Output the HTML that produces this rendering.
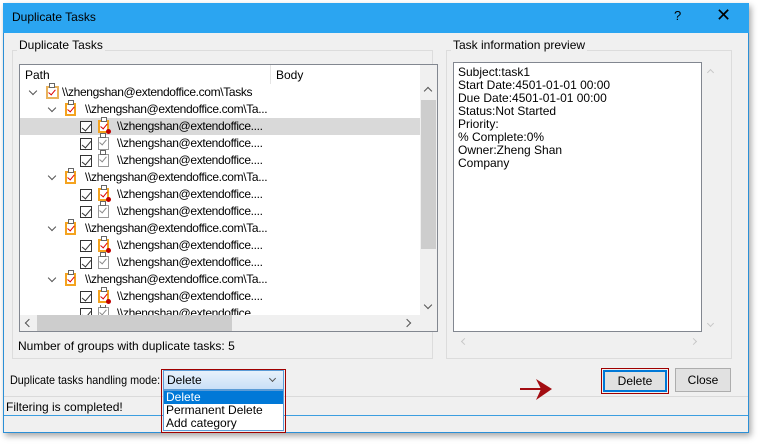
<!DOCTYPE html>
<html><head><meta charset="utf-8"><style>
*{margin:0;padding:0;box-sizing:border-box}
body{width:758px;height:445px;background:#fff;font-family:"Liberation Sans",sans-serif;font-size:12px;color:#000;position:relative;overflow:hidden}
.a{position:absolute;white-space:nowrap}
.win{left:3px;top:3px;width:746px;height:430px;background:#f0f0f0;border:1px solid #2b8fd6;box-shadow:2px 3px 6px rgba(0,0,0,.35)}
.title{left:3px;top:3px;width:746px;height:30px;background:#2ba5f1}
.gb{border:1px solid #dcdcdc}
.row{position:absolute;left:20px;width:400px;height:17px;line-height:17px;letter-spacing:-0.35px}
.cb{position:absolute;top:3px;width:12px;height:12px;border:1px solid #333;background:#fff}
.cb:after{content:"";position:absolute;left:3px;top:0px;width:4px;height:8px;border-right:1.5px solid #333;border-bottom:1.5px solid #333;transform:rotate(40deg)}
.chev{position:absolute;top:4px;width:6px;height:6px;border-right:1.5px solid #555;border-bottom:1.5px solid #555;transform:rotate(45deg)}
.ic{position:absolute;top:2px;width:11px;height:13px;border:2px solid #f4a31f;background:#fff}
.ic.g{border-color:#999;border-width:1.5px}
.ic:before{content:"";position:absolute;left:1px;top:-5px;width:4px;height:3px;border:1px solid #666;background:#fff}
.ic:after{content:"";position:absolute;left:2px;top:0px;width:3px;height:6px;border-right:1.5px solid #d00;border-bottom:1.5px solid #d00;transform:rotate(40deg)}
.ic.g:after{border-color:#888}
.dot{position:absolute;top:11px;width:5px;height:5px;border-radius:50%;background:#c00000}
.t{position:absolute;top:0}
</style></head><body>
<div class="a win"></div>
<div class="a title"></div>
<div class="a" style="left:12px;top:10px;font-size:12px">Duplicate Tasks</div>
<div class="a" style="left:674px;top:8px;font-size:13px">?</div>
<div class="a" style="left:716px;top:5px;font-size:18px;font-weight:300">✕</div>

<div class="a gb" style="left:12px;top:50px;width:421px;height:309px"></div>
<div class="a" style="left:17px;top:38px;background:#f0f0f0;padding:0 2px">Duplicate Tasks</div>
<div class="a" style="left:19px;top:64px;width:419px;height:268px;background:#fff;border:1px solid #828790;overflow:hidden">
 <div class="a" style="left:250px;top:0;width:1px;height:19px;background:#e5e5e5"></div>
 <div class="a" style="left:5px;top:3px">Path</div>
 <div class="a" style="left:256px;top:3px">Body</div>
 <div class="a" style="left:400px;top:0;width:17px;height:250px;background:#f0f0f0"></div>
 <div class="a" style="left:401px;top:35px;width:15px;height:149px;background:#cdcdcd"></div>
 <div class="a" style="left:405px;top:23px;width:6px;height:6px;border-left:1.5px solid #555;border-top:1.5px solid #555;transform:rotate(45deg)"></div>
 <div class="a" style="left:405px;top:237px;width:6px;height:6px;border-right:1.5px solid #555;border-bottom:1.5px solid #555;transform:rotate(45deg)"></div>
 <div class="a" style="left:0;top:250px;width:417px;height:17px;background:#f0f0f0"></div>
 <div class="a" style="left:17px;top:250px;width:195px;height:17px;background:#cdcdcd"></div>
 <div class="a" style="left:6px;top:255px;width:6px;height:6px;border-left:1.5px solid #555;border-bottom:1.5px solid #555;transform:rotate(45deg)"></div>
 <div class="a" style="left:384px;top:255px;width:6px;height:6px;border-right:1.5px solid #555;border-top:1.5px solid #555;transform:rotate(45deg)"></div>
</div>
<div class="a" style="left:20px;top:118px;width:400px;height:17px;background:#d9d9d9"></div>
<div id="rows"></div>

<div class="a" style="left:18px;top:339px">Number of groups with duplicate tasks: 5</div>

<div class="a gb" style="left:446px;top:50px;width:286px;height:309px"></div>
<div class="a" style="left:451px;top:38px;background:#f0f0f0;padding:0 2px">Task information preview</div>
<div class="a" style="left:453px;top:62px;width:249px;height:270px;background:#fff;border:1px solid #828790;padding:3px 0 0 4px;line-height:13px">Subject:task1<br>Start Date:4501-01-01 00:00<br>Due Date:4501-01-01 00:00<br>Status:Not Started<br>Priority:<br>% Complete:0%<br>Owner:Zheng Shan<br>Company</div>
<div class="a" style="left:708px;top:70px;width:5px;height:5px;border-left:1.5px solid #c8c8c8;border-top:1.5px solid #c8c8c8;transform:rotate(45deg)"></div>
<div class="a" style="left:708px;top:321px;width:5px;height:5px;border-right:1.5px solid #c8c8c8;border-bottom:1.5px solid #c8c8c8;transform:rotate(45deg)"></div>
<div class="a" style="left:462px;top:339px;width:5px;height:5px;border-left:1.5px solid #c8c8c8;border-bottom:1.5px solid #c8c8c8;transform:rotate(45deg)"></div>
<div class="a" style="left:691px;top:339px;width:5px;height:5px;border-right:1.5px solid #c8c8c8;border-top:1.5px solid #c8c8c8;transform:rotate(45deg)"></div>

<div class="a" style="left:10px;top:373px;transform:scaleX(0.9);transform-origin:0 0">Duplicate tasks handling mode:</div>
<div class="a" style="left:4px;top:396px;width:744px;height:1px;background:#dadada"></div>
<div class="a" style="left:6px;top:400px">Filtering is completed!</div>
<div class="a" style="left:4px;top:415px;width:744px;height:1px;background:#3c9ee0"></div>

<div class="a" style="left:161px;top:369px;width:125px;height:64px;border:1px solid #a00000"></div>
<div class="a" style="left:163px;top:370px;width:121px;height:20px;background:linear-gradient(#e8f2fb,#c9e0f7);border:1px solid #5a9bd6;padding:2px 0 0 3px">Delete</div>
<div class="a" style="left:270px;top:376px;width:5px;height:5px;border-right:1px solid #555;border-bottom:1px solid #555;transform:rotate(45deg)"></div>
<div class="a" style="left:163px;top:390px;width:121px;height:41px;background:#fff;border:1px solid #5a9bd6;line-height:13px">
 <div style="background:#0078d7;color:#fff;padding-left:2px">Delete</div>
 <div style="padding-left:2px">Permanent Delete</div>
 <div style="padding-left:2px">Add category</div>
</div>

<svg class="a" style="left:518px;top:377px" width="36" height="25"><path d="M2 11h22V13H2z" fill="#a30d12"/><path d="M18 2 L34 12 L18 23 L23 12z" fill="#a30d12"/></svg>

<div class="a" style="left:601px;top:368px;width:68px;height:26px;border:1px solid #a00000;padding:1px">
 <div style="width:100%;height:100%;border:2px solid #0078d7;background:#e1e1e1;text-align:center;line-height:19px">Delete</div></div>
<div class="a" style="left:675px;top:368px;width:56px;height:24px;border:1px solid #adadad;background:#e1e1e1;text-align:center;line-height:22px">Close</div>

<script>
var R=[[0,'f','\\\\zhengshan@extendoffice.com\\Tasks'],[1,'g','\\\\zhengshan@extendoffice.com\\Ta...'],[2,'r'],[2,'x'],[2,'x'],[1,'g','\\\\zhengshan@extendoffice.com\\Ta...'],[2,'r'],[2,'x'],[1,'g','\\\\zhengshan@extendoffice.com\\Ta...'],[2,'r'],[2,'x'],[1,'g','\\\\zhengshan@extendoffice.com\\Ta...'],[2,'r'],[2,'x']];
var h='';R.forEach(function(r,i){var top=84+i*17;if(top>=315)return;var s='';
if(r[0]==0){s+='<div class="chev" style="left:10px"></div><div class="ic" style="left:26px;border-color:#e9b25c;width:13px"></div><div class="t" style="left:42px">'+r[2]+'</div>';}
else if(r[0]==1){s+='<div class="chev" style="left:29px"></div><div class="ic" style="left:45px"></div><div class="t" style="left:65px">'+r[2]+'</div>';}
else{s+='<div class="cb" style="left:60px"></div><div class="ic'+(r[1]=='x'?' g':'')+'" style="left:78px"></div>'+(r[1]=='r'?'<div class="dot" style="left:86px"></div>':'')+'<div class="t" style="left:97px">\\\\zhengshan@extendoffice....</div>';}
var clip=top+17>315?'height:'+(315-top)+'px;overflow:hidden;':'';
h+='<div class="row" style="top:'+top+'px;'+clip+'">'+s+'</div>';});
document.getElementById('rows').innerHTML=h;
</script>
</body></html>
